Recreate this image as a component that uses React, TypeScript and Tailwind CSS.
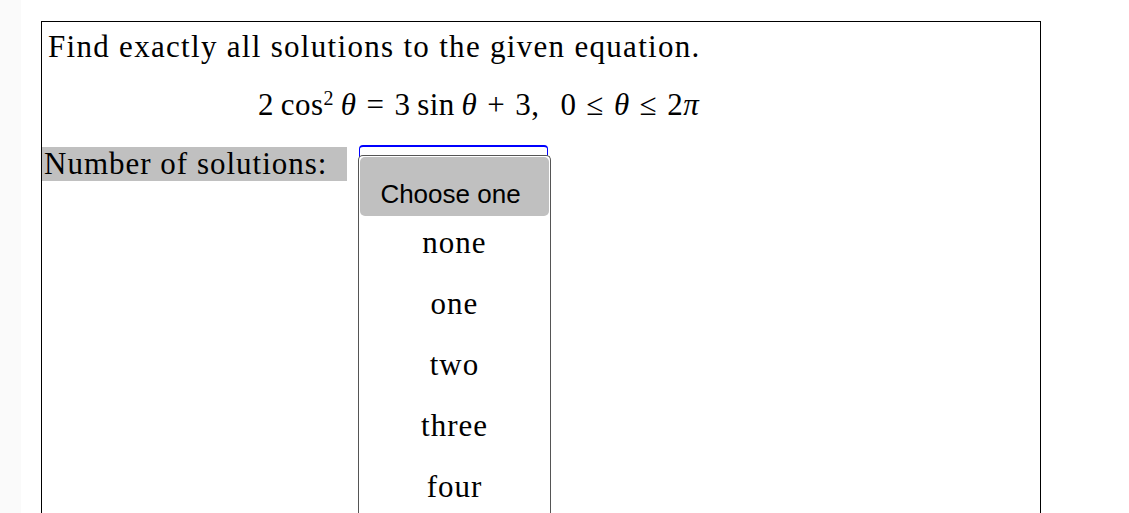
import React from "react";

const serif = { fontFamily: '"Liberation Serif", "Times New Roman", serif' };

function Rel({ children }: { children: React.ReactNode }) {
  return <span className="mx-[10px]">{children}</span>;
}

export default function App() {
  const options = ["none", "one", "two", "three", "four"];
  return (
    <div className="flex h-[513px] w-[1129px] overflow-hidden bg-white" style={serif}>
      <div className="w-[21px] shrink-0 bg-[#fafafa]" />
      <div className="flex-1 pl-[20px] pt-[21px]">
        <div className="h-[520px] w-[1000px] border border-black text-black">
          <p className="pl-[6px] pt-[7px] text-[31px] leading-[36px] tracking-[1.3px]">
            Find exactly all solutions to the given equation.
          </p>
          <div className="mt-[22px] pl-[216px] text-[31px] leading-[36px] tracking-[0.5px]">
            2&thinsp;cos<sup className="text-[20px]">2</sup>&thinsp;<i>θ</i>
            <Rel>=</Rel>3&thinsp;sin&thinsp;<i>θ</i>
            <Rel>+</Rel>3,<span className="ml-[21px]">0</span>
            <Rel>≤</Rel>
            <i>θ</i>
            <Rel>≤</Rel>2<i>π</i>
          </div>
          <div className="mt-[24px] flex items-start">
            <div className="h-[34px] w-[305px] bg-[#c0c0c0] pl-[2px] text-[31px] leading-[34px] tracking-[1px]">
              Number of solutions:
            </div>
            <div className="relative -mt-[2px] ml-[11px] w-[191px]">
              <div className="mx-[1px] h-[12px] rounded-t-[4px] border-x border-t-2 border-[#0000ff]" />
              <div className="absolute left-0 top-[10px] w-[193px] rounded-t-[5px] border-x border-t border-[#555] bg-white">
                <div
                  className="m-[1px] flex h-[59px] items-center justify-center rounded-[5px] bg-[#c0c0c0] pr-[8px] pt-[16px] text-[26px] text-black"
                  style={{ fontFamily: '"Liberation Sans", Arial, sans-serif' }}
                >
                  Choose one
                </div>
                {options.map((o, i) => (
                  <div
                    key={o}
                    className={`flex items-center justify-center text-[31px] tracking-[1px] ${i === 0 ? "h-[57px] pb-[4px]" : "h-[61px]"}`}
                  >
                    {o}
                  </div>
                ))}
              </div>
            </div>
          </div>
        </div>
      </div>
    </div>
  );
}
